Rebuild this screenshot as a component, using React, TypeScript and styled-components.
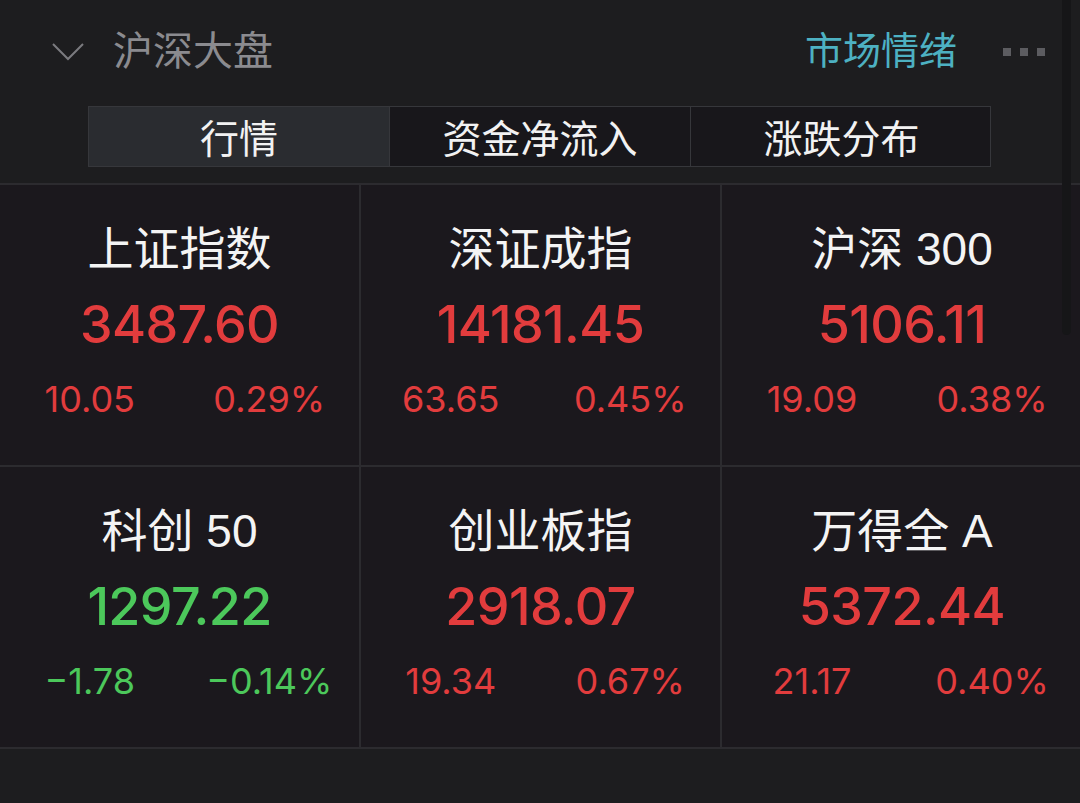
import React from "react";
import styled, { createGlobalStyle } from "styled-components";

const GlobalStyle = createGlobalStyle`
  html, body {
    margin: 0;
    padding: 0;
    background: #1d1d1f;
  }
`;

type Trend = "up" | "down";

interface IndexQuote {
  name: string;
  price: string;
  change: string;
  percent: string;
  trend: Trend;
}

const quotes: Array<IndexQuote> = [
  { name: "上证指数", price: "3487.60", change: "10.05", percent: "0.29%", trend: "up" },
  { name: "深证成指", price: "14181.45", change: "63.65", percent: "0.45%", trend: "up" },
  { name: "沪深 300", price: "5106.11", change: "19.09", percent: "0.38%", trend: "up" },
  { name: "科创 50", price: "1297.22", change: "\u22121.78", percent: "\u22120.14%", trend: "down" },
  { name: "创业板指", price: "2918.07", change: "19.34", percent: "0.67%", trend: "up" },
  { name: "万得全 A", price: "5372.44", change: "21.17", percent: "0.40%", trend: "up" },
];

const tabs = ["行情", "资金净流入", "涨跌分布"];

const trendColor = (t: Trend) => (t === "up" ? "#e23c3d" : "#4cc85b");

const StyledPage = styled.div`
  position: relative;
  width: 1080px;
  height: 803px;
  overflow: hidden;
  background: #1d1d1f;
  font-family: "Liberation Sans", "Noto Sans CJK SC", sans-serif;
`;

const StyledScrollThumb = styled.div`
  position: absolute;
  top: 0;
  right: 9px;
  width: 9px;
  height: 335px;
  border-radius: 0 0 5px 5px;
  background: #161618;
`;

const StyledHeader = styled.div`
  height: 106px;
  display: flex;
  align-items: center;
  padding: 0 35px 0 52px;
  box-sizing: border-box;
`;

const StyledChevron = styled.svg`
  width: 32px;
  height: 18px;
  margin-top: -2px;
  flex-shrink: 0;
`;

const StyledTitle = styled.div`
  margin-left: 29px;
  font-size: 40px;
  line-height: 56px;
  color: #8b8b8f;
  margin-top: -4px;
  flex: 1;
`;

const StyledMood = styled.div`
  font-size: 38px;
  line-height: 56px;
  color: #4db1c2;
  margin-top: -4px;
`;

const StyledDots = styled.div`
  display: flex;
  gap: 9px;
  margin-left: 46px;
  margin-top: -2px;
`;

const StyledDot = styled.span`
  width: 8px;
  height: 8px;
  background: #5c5c60;
`;

const StyledTabs = styled.div`
  display: grid;
  grid-template-columns: 300px 301px 302px;
  height: 61px;
  margin-left: 88px;
  width: 903px;
  box-sizing: border-box;
  border: 1px solid #36373b;
  background: #18171b;
`;

const StyledTab = styled.div<{ $active: boolean }>`
  display: flex;
  align-items: center;
  justify-content: center;
  font-size: 39px;
  color: #f2f2f2;
  background: ${(p) => (p.$active ? "#2a2c30" : "transparent")};
  border-left: ${(p) => (p.$active ? "none" : "1px solid #36373b")};
  padding-bottom: 2px;
`;

const StyledGrid = styled.div`
  margin-top: 16px;
  display: grid;
  grid-template-columns: 359px 359px 360px;
  grid-auto-rows: 280px;
  gap: 2px;
  padding: 2px 0;
  background: #2c2b2f;
`;

const StyledCell = styled.div`
  display: flex;
  flex-direction: column;
  align-items: center;
  background: #1b181d;
  padding-top: 36px;
  box-sizing: border-box;
`;

const StyledName = styled.div`
  font-size: 46px;
  line-height: 56px;
  color: #f4f4f4;
  white-space: pre;
`;

// prices and changes use proportional digits, narrow "1"
const StyledPrice = styled.div<{ $trend: Trend }>`
  margin-top: 16px;
  font-family: Inter, "Liberation Sans", sans-serif;
  font-weight: 500;
  font-size: 52px;
  letter-spacing: -0.6px;
  line-height: 64px;
  color: ${(p) => trendColor(p.$trend)};
`;

const StyledChanges = styled.div<{ $trend: Trend }>`
  margin-top: 20px;
  width: 100%;
  display: grid;
  grid-template-columns: 1fr 1fr;
  font-family: Inter, "Liberation Sans", sans-serif;
  font-size: 36px;
  line-height: 44px;
  text-align: center;
  color: ${(p) => trendColor(p.$trend)};
`;

export default function App() {
  return (
    <StyledPage>
      <GlobalStyle />
      <StyledHeader>
        <StyledChevron viewBox="0 0 32 18">
          <polyline
            points="1,1 16,16 31,1"
            fill="none"
            stroke="#7b7b7f"
            strokeWidth="2"
          />
        </StyledChevron>
        <StyledTitle>沪深大盘</StyledTitle>
        <StyledMood>市场情绪</StyledMood>
        <StyledDots>
          <StyledDot />
          <StyledDot />
          <StyledDot />
        </StyledDots>
      </StyledHeader>

      <StyledTabs>
        {tabs.map((t, i) => (
          <StyledTab key={t} $active={i === 0}>
            {t}
          </StyledTab>
        ))}
      </StyledTabs>

      <StyledGrid>
        {quotes.map((q) => (
          <StyledCell key={q.name}>
            <StyledName>{q.name}</StyledName>
            <StyledPrice $trend={q.trend}>{q.price}</StyledPrice>
            <StyledChanges $trend={q.trend}>
              <span>{q.change}</span>
              <span>{q.percent}</span>
            </StyledChanges>
          </StyledCell>
        ))}
      </StyledGrid>

      <StyledScrollThumb />
    </StyledPage>
  );
}
